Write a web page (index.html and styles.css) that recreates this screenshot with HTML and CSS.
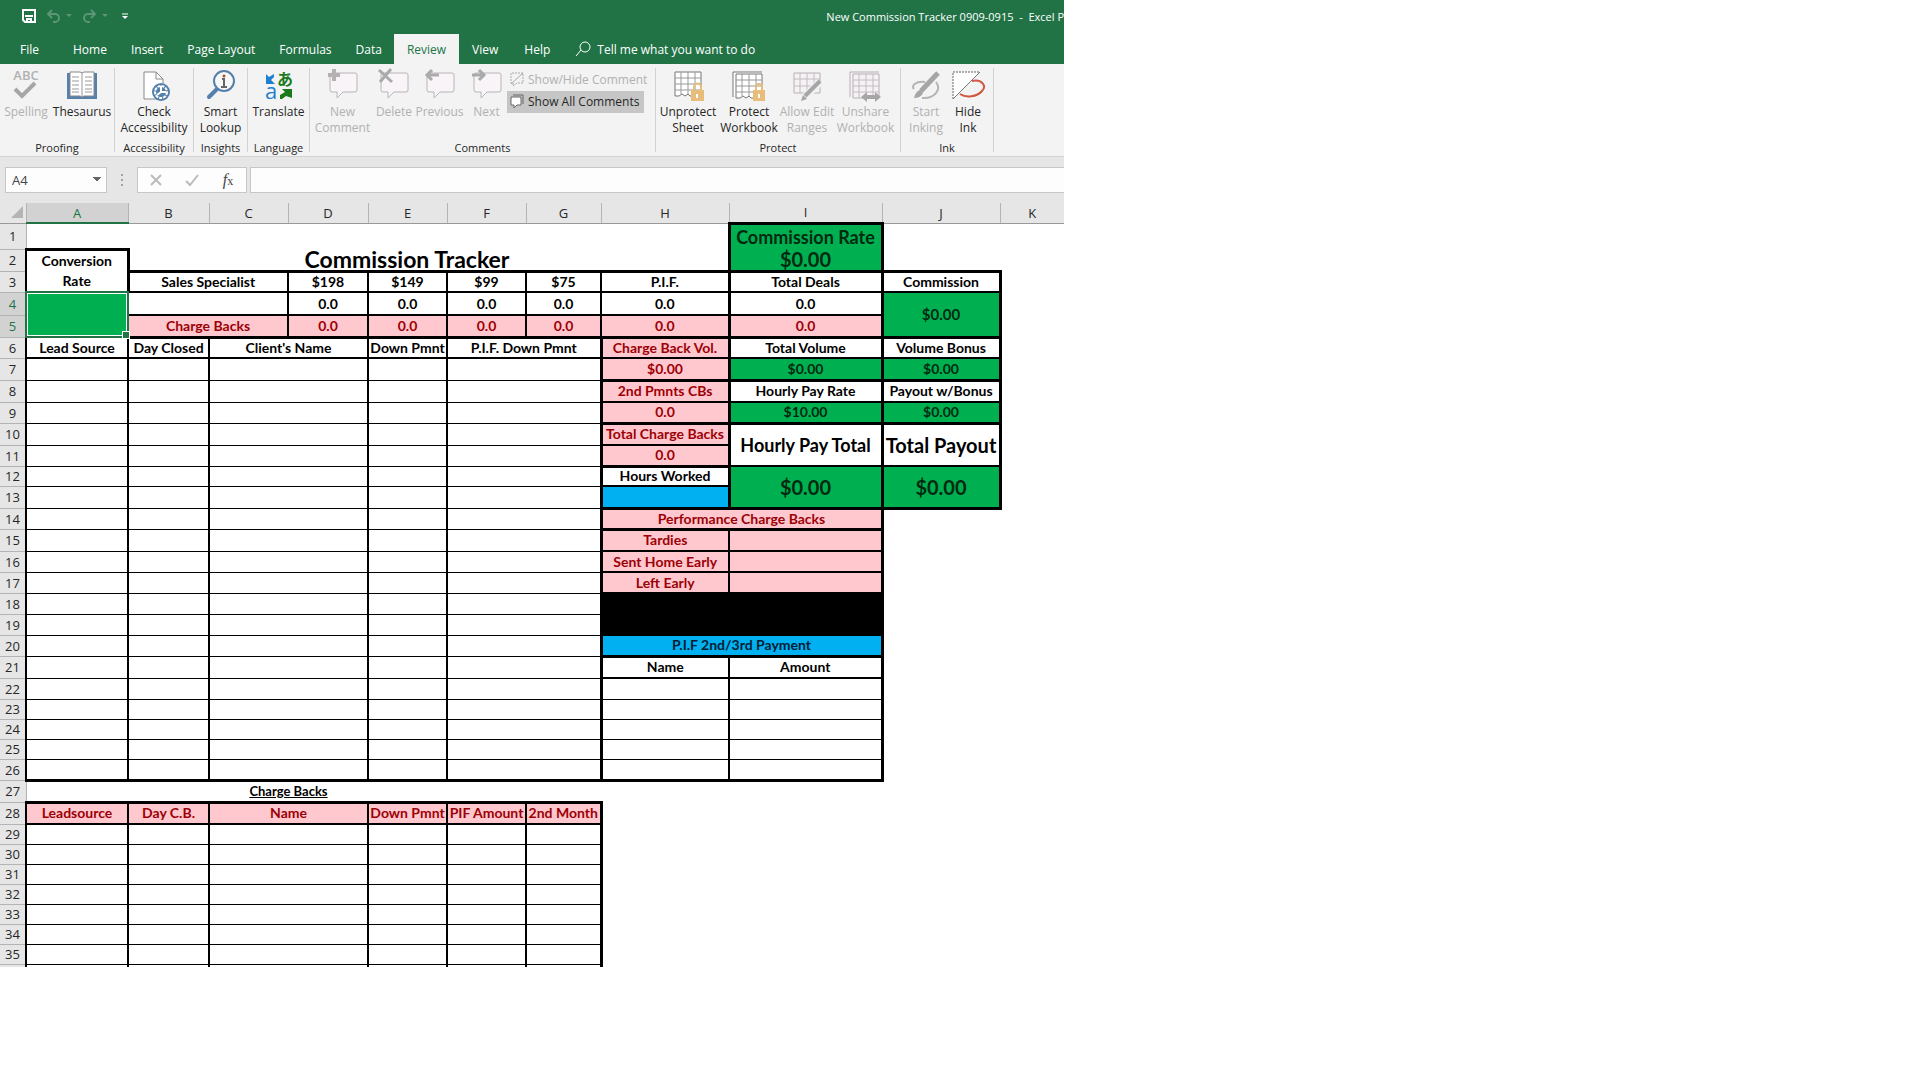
FILE: index.html
```html
<!DOCTYPE html>
<html lang="en">
<head>
  <meta charset="UTF-8">
  <meta name="viewport" content="width=device-width, initial-scale=1.0">
  <title>New Commission Tracker 0909-0915</title>
  <link rel="stylesheet" href="styles.css">
</head>
<body>
  <div class="app">
    <header class="titlebar">
      <div class="quick">
        <button aria-label="Save"><svg width="16" height="16" viewBox="0 0 16 16"><path d="M2 2h12v12H4l-2-2z M4 8h8" fill="none" stroke="#fff" stroke-width="2"/><path d="M5 10h6v4H9v-2H7v2H5z" fill="#fff"/></svg></button>
        <button aria-label="Undo"><svg width="28" height="16" viewBox="0 0 28 16"><path d="M3 6h7a4 4 0 0 1 0 8H8M7 2L3 6l4 4" fill="none" stroke="#5b9675" stroke-width="2"/><path d="M21 6h6l-3 3z" fill="#5b9675"/></svg></button>
        <button aria-label="Redo"><svg width="28" height="16" viewBox="0 0 28 16"><path d="M14 6H7a4 4 0 0 0 0 8h2M10 2l4 4-4 4" fill="none" stroke="#5b9675" stroke-width="2"/><path d="M21 6h6l-3 3z" fill="#5b9675"/></svg></button>
        <button aria-label="Customize Quick Access Toolbar"><svg width="16" height="16" viewBox="0 0 16 16"><path d="M5 6h6" stroke="#fff"/><path d="M5 8h6l-3 3z" fill="#fff"/></svg></button>
      </div>
      <div class="doc">New Commission Tracker 0909-0915 &nbsp;-&nbsp; Excel P</div>
    </header>

    <nav class="tabs">
      <button class="file">File</button>
      <button>Home</button>
      <button>Insert</button>
      <button>Page Layout</button>
      <button>Formulas</button>
      <button>Data</button>
      <button class="wide active">Review</button>
      <button class="wide">View</button>
      <button class="wide">Help</button>
      <button class="tell">
        <svg width="16" height="16" viewBox="0 0 16 16"><circle cx="10" cy="6" r="5" fill="none" stroke="#fff"/><path d="M6 9L1 15" stroke="#fff"/></svg>
        Tell me what you want to do
      </button>
    </nav>

    <div class="ribbon">
      <section class="group">
        <div class="tools proofing">
          <button disabled><svg viewBox="0 0 32 32"><text x="16" y="11" class="abc">ABC</text><path d="M5 20l7 7L25 14" fill="none" stroke="#a6a6a6" stroke-width="4"/></svg>Spelling</button>
          <button><svg viewBox="0 0 32 32"><path d="M1 4h30v26H1z" fill="#5580ab"/><path d="M4 3h10l2 1 2-1h10v24H18l-2 1-2-1H4z" fill="#fff" stroke="#888"/><path d="M16 4v24M6 8h7M6 12h7M6 16h7M6 20h7M6 23h7M19 8h7M19 12h7M19 16h7M19 20h7M19 23h7" stroke="#999"/></svg>Thesaurus</button>
        </div>
        <h2>Proofing</h2>
      </section>
      <section class="group">
        <div class="tools access">
          <button><svg viewBox="0 0 32 32"><path d="M6 3h12l7 7v20H6z" fill="#fff" stroke="#888"/><path d="M18 3v7h7" fill="none" stroke="#888"/><circle cx="23" cy="23" r="9" fill="#5580ab"/><circle cx="23" cy="23" r="6" fill="none" stroke="#fff" stroke-width="2" stroke-dasharray="3 1"/><path d="M23 17v6h5M23 23l-4 3" stroke="#fff" fill="none" stroke-width="2"/></svg>Check<br>Accessibility</button>
        </div>
        <h2>Accessibility</h2>
      </section>
      <section class="group">
        <div class="tools insights">
          <button><svg viewBox="0 0 32 32"><path d="M12 20L4 28" stroke="#5580ab" stroke-width="4" stroke-linecap="round"/><circle cx="19" cy="12" r="10" fill="#f8f8f8" stroke="#5580ab" stroke-width="2"/><path d="M17 10h2v8M16 18h6" fill="none" stroke="#666" stroke-width="2"/><circle cx="19" cy="7" r="1.500" fill="#a0522d"/></svg>Smart<br>Lookup</button>
        </div>
        <h2>Insights</h2>
      </section>
      <section class="group">
        <div class="tools language">
          <button><svg viewBox="0 0 32 32"><path d="M3 5l3 3 5-3v3L8 11l4 4H3z" fill="#1f7fd0"/><path d="M29 29V20h-10l3 3-5 3v4h2l4-3z" fill="#1b7a1b"/><text x="2" y="30" class="latin">a</text><text x="14" y="16" class="kana">あ</text></svg>Translate</button>
        </div>
        <h2>Language</h2>
      </section>
      <section class="group">
        <div class="tools comments">
          <button disabled><svg viewBox="0 0 32 32"><path d="M3 6q0-2 2-2h23q2 0 2 2v15q0 2-2 2H16l-6 6v-6H5q-2 0-2-2z" class="bubble"/><path d="M7 0v12M1 6h12" stroke="#b4b0b4" stroke-width="4"/></svg>New<br>Comment</button>
          <button disabled><svg viewBox="0 0 32 32"><path d="M3 6q0-2 2-2h23q2 0 2 2v15q0 2-2 2H16l-6 6v-6H5q-2 0-2-2z" class="bubble"/><path d="M1 1l13 12M13 0L2 13" stroke="#aaa" stroke-width="3"/></svg>Delete</button>
          <button disabled><svg viewBox="0 0 32 32"><path d="M3 6q0-2 2-2h23q2 0 2 2v15q0 2-2 2H16l-6 6v-6H5q-2 0-2-2z" class="bubble"/><path d="M3 6h12M8 1L3 6l5 5" fill="none" stroke="#aaa" stroke-width="3"/></svg>Previous</button>
          <button disabled><svg viewBox="0 0 32 32"><path d="M3 6q0-2 2-2h23q2 0 2 2v15q0 2-2 2H16l-6 6v-6H5q-2 0-2-2z" class="bubble"/><path d="M1 6h12M8 1l5 5-5 5" fill="none" stroke="#aaa" stroke-width="3"/></svg>Next</button>
          <div class="stack">
            <button disabled><svg viewBox="0 0 16 16"><path d="M2 3V1h12v10H8l-4 3v-3H2V3" fill="none" stroke="#aaa" stroke-dasharray="2 1"/><path d="M2 12L14 1" stroke="#aaa"/></svg>Show/Hide Comment</button>
            <button class="on"><svg viewBox="0 0 16 16"><path d="M4 1h10v9" fill="none" stroke="#666"/><path d="M2 3h10v8H8l-3 3v-3H2z" fill="#fff" stroke="#666"/></svg>Show All Comments</button>
          </div>
        </div>
        <h2>Comments</h2>
      </section>
      <section class="group">
        <div class="tools protect">
          <button><svg viewBox="0 0 32 32"><path d="M3 3h26v24H18l-2-2-3 2-3-2-3 2H3z" class="sheet"/><path d="M3 9h26M3 15h26M3 21h26M9 3v22M16 3v22M23 3v22" class="grid"/><path d="M19 21h13v11H19z" class="lock"/><path d="M22 21v-3a3 3 0 0 1 7 0v3" class="shackle"/><path d="M25 25v4" stroke="#fff" stroke-width="2"/></svg>Unprotect<br>Sheet</button>
          <button><svg viewBox="0 0 32 32"><path d="M0 28V3h29" class="sheet"/><path d="M3 5h26v24H18l-2-2-3 2-3-2-3 2H3z" class="sheet"/><path d="M3 11h26M3 17h26M3 23h26M9 5v22M16 5v22M23 5v22" class="grid"/><path d="M20 21h12v11H20z" class="lock"/><path d="M23 21v-3a3 3 0 0 1 6 0v3" class="shackle"/><path d="M26 25v4" stroke="#fff" stroke-width="2"/></svg>Protect<br>Workbook</button>
          <button disabled><svg viewBox="0 0 32 32"><path d="M3 4h26v20H3z" class="sheet"/><path d="M3 10h26M3 17h26M9 4v20M16 4v20M23 4v20" class="grid"/><path d="M14 28L29 13" stroke="#f1f1f1" stroke-width="8"/><path d="M14 27L29 12" stroke="#a6a6a6" stroke-width="4"/><path d="M10 32l2-6 4 4z" fill="#a6a6a6"/></svg>Allow Edit<br>Ranges</button>
          <button disabled><svg viewBox="0 0 32 32"><path d="M0 28V3h29" class="sheet"/><path d="M3 5h26v24H3z" class="sheet"/><path d="M3 11h26M3 17h26M3 23h26M9 5v24M16 5v24M23 5v24" class="grid"/><path d="M11 28l6-5v3h8v-3l6 5-6 5v-3h-8v3z" fill="#a6a6a6"/></svg>Unshare<br>Workbook</button>
        </div>
        <h2>Protect</h2>
      </section>
      <section class="group">
        <div class="tools ink">
          <button disabled><svg viewBox="0 0 32 32"><path d="M15 13C5 12 1 17 4 20M26 13c6 8-2 17-14 16" fill="none" stroke="#b4b4b4" stroke-width="2"/><path d="M11 22L28 4" stroke="#a6a6a6" stroke-width="5"/><path d="M4 29q2-8 7-8l2 3q-2 5-9 5z" fill="#a6a6a6"/></svg>Start<br>Inking</button>
          <button><svg viewBox="0 0 32 32"><path d="M1 30V3h27z" fill="#fff"/><path d="M1 30V3h27" fill="none" stroke="#666" stroke-dasharray="2 1"/><path d="M1 30L28 3" stroke="#777"/><path d="M20 12c10-2 15 5 10 10-5 6-16 7-22 3" fill="none" stroke="#d2573f" stroke-width="2"/></svg>Hide<br>Ink</button>
        </div>
        <h2>Ink</h2>
      </section>
    </div>

    <div class="formula-bar">
      <select class="name-box" aria-label="Name Box"><option>A4</option></select>
      <span class="dots"><i></i><i></i><i></i></span>
      <div class="entry">
        <button aria-label="Cancel"><svg width="14" height="14" viewBox="0 0 14 14"><path d="M2 2l10 10M12 2L2 12" stroke="#bbb" stroke-width="2"/></svg></button>
        <button aria-label="Enter"><svg width="14" height="14" viewBox="0 0 14 14"><path d="M1 8l4 4L13 2" fill="none" stroke="#bbb" stroke-width="2"/></svg></button>
        <button class="fx" aria-label="Insert Function"><i>f</i><sub>x</sub></button>
      </div>
      <input class="formula" type="text" aria-label="Formula">
    </div>

    <table class="sheet-table">
      <colgroup>
        <col class="w26"><col class="w102"><col class="w81"><col class="w79"><col class="w80"><col class="w79"><col class="w79"><col class="w75"><col class="w128"><col class="w153"><col class="w118"><col class="w64">
      </colgroup>
      <thead>
        <tr>
          <th class="corner"><svg width="12" height="12" viewBox="0 0 12 12"><path d="M12 0v12H0z" fill="#b4b4b4"/></svg></th>
          <th class="sel">A</th><th>B</th><th>C</th><th>D</th><th>E</th><th>F</th><th>G</th><th>H</th><th>I</th><th>J</th><th class="last">K</th>
        </tr>
      </thead>
      <tbody>
        <tr class="h26"><th>1</th><td></td><td></td><td></td><td colspan="3" rowspan="2" class="title">Commission Tracker</td><td></td><td></td><td class="box t3 l3 r3 b0 green rate">Commission Rate</td><td></td><td></td></tr>
        <tr class="h22"><th>2</th><td rowspan="2" class="box t3 r3 conv">Conversion<br>Rate</td><td></td><td></td><td></td><td></td><td class="box l3 r3 b3 t0 green total">$0.00</td><td></td><td></td></tr>
        <tr class="h21"><th>3</th><td colspan="2" class="box t3">Sales Specialist</td><td class="box t3">$198</td><td class="box t3">$149</td><td class="box t3">$99</td><td class="box t3">$75</td><td class="box t3 r3">P.I.F.</td><td class="box t3 r3">Total Deals</td><td class="box t3 r3">Commission</td><td></td></tr>
        <tr class="h23"><th class="sel">4</th><td rowspan="2" class="box green picked"></td><td colspan="2" class="box"></td><td class="box">0.0</td><td class="box">0.0</td><td class="box">0.0</td><td class="box">0.0</td><td class="box r3">0.0</td><td class="box r3">0.0</td><td rowspan="2" class="box b3 r3 green pay">$0.00</td><td></td></tr>
        <tr class="h22"><th class="sel">5</th><td colspan="2" class="box b3 pink">Charge Backs</td><td class="box b3 pink">0.0</td><td class="box b3 pink">0.0</td><td class="box b3 pink">0.0</td><td class="box b3 pink">0.0</td><td class="box b3 r3 pink">0.0</td><td class="box b3 r3 pink">0.0</td><td></td></tr>
        <tr class="h21"><th>6</th><td class="box">Lead Source</td><td class="box">Day Closed</td><td colspan="2" class="box">Client's Name</td><td class="box">Down Pmnt</td><td colspan="2" class="box r3">P.I.F. Down Pmnt</td><td class="box r3 pink">Charge Back Vol.</td><td class="box r3">Total Volume</td><td class="box r3">Volume Bonus</td><td></td></tr>
        <tr class="h22"><th>7</th><td class="line"></td><td class="line"></td><td colspan="2" class="line"></td><td class="line"></td><td colspan="2" class="line r3"></td><td class="box b3 r3 pink">$0.00</td><td class="box b3 r3 green">$0.00</td><td class="box b3 r3 green">$0.00</td><td></td></tr>
        <tr class="h22"><th>8</th><td class="line"></td><td class="line"></td><td colspan="2" class="line"></td><td class="line"></td><td colspan="2" class="line r3"></td><td class="box r3 pink">2nd Pmnts CBs</td><td class="box r3">Hourly Pay Rate</td><td class="box r3">Payout w/Bonus</td><td></td></tr>
        <tr class="h21"><th>9</th><td class="line"></td><td class="line"></td><td colspan="2" class="line"></td><td class="line"></td><td colspan="2" class="line r3"></td><td class="box b3 r3 pink">0.0</td><td class="box b3 r3 green">$10.00</td><td class="box b3 r3 green">$0.00</td><td></td></tr>
        <tr class="h22"><th>10</th><td class="line"></td><td class="line"></td><td colspan="2" class="line"></td><td class="line"></td><td colspan="2" class="line r3"></td><td class="box r3 pink">Total Charge Backs</td><td rowspan="2" class="box r3 rate">Hourly Pay Total</td><td rowspan="2" class="box r3 total">Total Payout</td><td></td></tr>
        <tr class="h21"><th>11</th><td class="line"></td><td class="line"></td><td colspan="2" class="line"></td><td class="line"></td><td colspan="2" class="line r3"></td><td class="box b3 r3 pink">0.0</td><td></td></tr>
        <tr class="h20"><th>12</th><td class="line"></td><td class="line"></td><td colspan="2" class="line"></td><td class="line"></td><td colspan="2" class="line r3"></td><td class="box r3">Hours Worked</td><td rowspan="2" class="box b3 r3 green total">$0.00</td><td rowspan="2" class="box b3 r3 green total">$0.00</td><td></td></tr>
        <tr class="h22"><th>13</th><td class="line"></td><td class="line"></td><td colspan="2" class="line"></td><td class="line"></td><td colspan="2" class="line r3"></td><td class="box b3 r3 blue"></td><td></td></tr>
        <tr class="h21"><th>14</th><td class="line"></td><td class="line"></td><td colspan="2" class="line"></td><td class="line"></td><td colspan="2" class="line r3"></td><td colspan="2" class="box b3 r3 pink">Performance Charge Backs</td><td></td><td></td></tr>
        <tr class="h22"><th>15</th><td class="line"></td><td class="line"></td><td colspan="2" class="line"></td><td class="line"></td><td colspan="2" class="line r3"></td><td class="box pink">Tardies</td><td class="box r3 pink"></td><td></td><td></td></tr>
        <tr class="h21"><th>16</th><td class="line"></td><td class="line"></td><td colspan="2" class="line"></td><td class="line"></td><td colspan="2" class="line r3"></td><td class="box pink">Sent Home Early</td><td class="box r3 pink"></td><td></td><td></td></tr>
        <tr class="h21"><th>17</th><td class="line"></td><td class="line"></td><td colspan="2" class="line"></td><td class="line"></td><td colspan="2" class="line r3"></td><td class="box pink">Left Early</td><td class="box r3 pink"></td><td></td><td></td></tr>
        <tr class="h21"><th>18</th><td class="line"></td><td class="line"></td><td colspan="2" class="line"></td><td class="line"></td><td colspan="2" class="line r3"></td><td colspan="2" rowspan="2" class="box r3 black"></td><td></td><td></td></tr>
        <tr class="h21"><th>19</th><td class="line"></td><td class="line"></td><td colspan="2" class="line"></td><td class="line"></td><td colspan="2" class="line r3"></td><td></td><td></td></tr>
        <tr class="h21"><th>20</th><td class="line"></td><td class="line"></td><td colspan="2" class="line"></td><td class="line"></td><td colspan="2" class="line r3"></td><td colspan="2" class="box b3 r3 blue">P.I.F 2nd/3rd Payment</td><td></td><td></td></tr>
        <tr class="h22"><th>21</th><td class="line"></td><td class="line"></td><td colspan="2" class="line"></td><td class="line"></td><td colspan="2" class="line r3"></td><td class="box">Name</td><td class="box r3">Amount</td><td></td><td></td></tr>
        <tr class="h21"><th>22</th><td class="line"></td><td class="line"></td><td colspan="2" class="line"></td><td class="line"></td><td colspan="2" class="line r3"></td><td class="line"></td><td class="line r3"></td><td></td><td></td></tr>
        <tr class="h20"><th>23</th><td class="line"></td><td class="line"></td><td colspan="2" class="line"></td><td class="line"></td><td colspan="2" class="line r3"></td><td class="line"></td><td class="line r3"></td><td></td><td></td></tr>
        <tr class="h20"><th>24</th><td class="line"></td><td class="line"></td><td colspan="2" class="line"></td><td class="line"></td><td colspan="2" class="line r3"></td><td class="line"></td><td class="line r3"></td><td></td><td></td></tr>
        <tr class="h20"><th>25</th><td class="line"></td><td class="line"></td><td colspan="2" class="line"></td><td class="line"></td><td colspan="2" class="line r3"></td><td class="line"></td><td class="line r3"></td><td></td><td></td></tr>
        <tr class="h21"><th>26</th><td class="line b3"></td><td class="line b3"></td><td colspan="2" class="line b3"></td><td class="line b3"></td><td colspan="2" class="line b3 r3"></td><td class="line b3"></td><td class="line b3 r3"></td><td></td><td></td></tr>
        <tr class="h22"><th>27</th><td></td><td></td><td colspan="2" class="under">Charge Backs</td><td></td><td></td><td></td><td></td><td></td><td></td><td></td></tr>
        <tr class="h22"><th>28</th><td class="box t3 pink">Leadsource</td><td class="box t3 pink">Day C.B.</td><td colspan="2" class="box t3 pink">Name</td><td class="box t3 pink">Down Pmnt</td><td class="box t3 pink">PIF Amount</td><td class="box t3 r3 pink">2nd Month</td><td></td><td></td><td></td><td></td></tr>
        <tr class="h20"><th>29</th><td class="line"></td><td class="line"></td><td colspan="2" class="line"></td><td class="line"></td><td class="line"></td><td class="line r3"></td><td></td><td></td><td></td><td></td></tr>
        <tr class="h20"><th>30</th><td class="line"></td><td class="line"></td><td colspan="2" class="line"></td><td class="line"></td><td class="line"></td><td class="line r3"></td><td></td><td></td><td></td><td></td></tr>
        <tr class="h20"><th>31</th><td class="line"></td><td class="line"></td><td colspan="2" class="line"></td><td class="line"></td><td class="line"></td><td class="line r3"></td><td></td><td></td><td></td><td></td></tr>
        <tr class="h20"><th>32</th><td class="line"></td><td class="line"></td><td colspan="2" class="line"></td><td class="line"></td><td class="line"></td><td class="line r3"></td><td></td><td></td><td></td><td></td></tr>
        <tr class="h20"><th>33</th><td class="line"></td><td class="line"></td><td colspan="2" class="line"></td><td class="line"></td><td class="line"></td><td class="line r3"></td><td></td><td></td><td></td><td></td></tr>
        <tr class="h20"><th>34</th><td class="line"></td><td class="line"></td><td colspan="2" class="line"></td><td class="line"></td><td class="line"></td><td class="line r3"></td><td></td><td></td><td></td><td></td></tr>
        <tr class="h20"><th>35</th><td class="line"></td><td class="line"></td><td colspan="2" class="line"></td><td class="line"></td><td class="line"></td><td class="line r3"></td><td></td><td></td><td></td><td></td></tr>
        <tr class="cut"><th></th><td class="line"></td><td class="line"></td><td colspan="2" class="line"></td><td class="line"></td><td class="line"></td><td class="line r3"></td><td></td><td></td><td></td><td></td></tr>
      </tbody>
    </table>
  </div>
</body>
</html>
```
FILE: styles.css
```css
* {
  box-sizing: border-box;
}
body {
  margin: 0;
  background: #fff;
  font-family: "Open Sans", "Noto Sans", sans-serif;
  font-size: 12px;
  color: #262626;
}
button {
  border: none;
  background: none;
  padding: 0;
  font: inherit;
  color: inherit;
  white-space: nowrap;
}
svg {
  overflow: visible;
}
.app {
  width: fit-content;
}

/* Title bar */
.titlebar {
  display: flex;
  justify-content: space-between;
  align-items: center;
  height: 34px;
  padding: 0 0 2px 21px;
  background: #217346;
  color: #fff;
}
.quick {
  display: flex;
  gap: 8px;
}
.quick button {
  display: flex;
}
.doc {
  font-size: 11px;
}

/* Tabs */
.tabs {
  display: flex;
  height: 30px;
  background: #217346;
  color: #fff;
}
.tabs button {
  padding: 0 12px;
}
.tabs .file {
  padding: 0 22px 0 20px;
}
.tabs .wide {
  padding: 0 13px;
}
.tabs .active {
  background: #f3f3f3;
  color: #217346;
}
.tabs .tell {
  display: flex;
  align-items: center;
  gap: 6px;
}

/* Ribbon */
.ribbon {
  display: flex;
  height: 93px;
  padding-top: 4px;
  background: #f3f3f3;
  border-bottom: 1px solid #d2d2d2;
}
.group {
  height: 84px;
  padding-top: 1px;
  border-right: 1px solid #d2d2d2;
}
.group h2 {
  margin: 0;
  font-size: 11px;
  font-weight: normal;
  line-height: 16px;
  text-align: center;
}
.tools {
  display: grid;
  height: 71px;
  align-items: start;
}
.tools button {
  line-height: 16px;
}
.tools button:disabled {
  color: #b1b1b1;
}
.tools > button > svg {
  display: block;
  width: 32px;
  height: 32px;
  margin: 0 auto 3px;
}
.proofing { grid-template-columns: 52px 60px 2px; }
.access { grid-template-columns: 78px; }
.insights { grid-template-columns: 53px; }
.language { grid-template-columns: 61px; }
.comments { grid-template-columns: 65px 38px 53px 41px 148px; }
.protect { grid-template-columns: 64px 58px 58px 59px 5px; }
.ink { grid-template-columns: 50px 34px 8px; }
.stack button {
  display: flex;
  align-items: center;
  gap: 3px;
  width: 137px;
  height: 22px;
  padding-left: 2px;
}
.stack .on {
  background: #c6c6c6;
}
.stack svg {
  flex: none;
  width: 16px;
  height: 16px;
}
.abc {
  font-size: 13px;
  font-weight: 600;
  text-anchor: middle;
  fill: #b1b1b1;
}
.latin {
  font-size: 22px;
  fill: #1f7fd0;
}
.kana {
  font-family: "Noto Sans CJK JP", sans-serif;
  font-size: 16px;
  font-weight: bold;
  fill: #1b7a1b;
}
.bubble {
  fill: #f8f4f8;
  stroke: #b8b4b8;
}
.sheet {
  fill: #fff;
  stroke: #777;
}
.grid {
  stroke: #999;
}
button:disabled .sheet {
  fill: #f5f1f5;
  stroke: #b4b0b4;
}
button:disabled .grid {
  stroke: #c0bcc0;
}
.lock {
  fill: #e8bd7b;
}
.shackle {
  fill: none;
  stroke: #e8bd7b;
  stroke-width: 2;
}

/* Formula bar */
.formula-bar {
  display: flex;
  height: 46px;
  padding: 10px 0 10px 5px;
  background: #e6e6e6;
}
.name-box,
.entry,
.formula {
  border: 1px solid #c6c6c6;
  background: #fdfdfd;
}
.name-box {
  width: 102px;
  padding: 0 6px;
  appearance: none;
  border-radius: 0;
  font: inherit;
  font-size: 13px;
  color: #444;
  background: conic-gradient(from 315deg at 50% 100%, #666 90deg, #fdfdfd 0) 87px 9px / 8px 4px no-repeat #fdfdfd;
}
.dots {
  display: flex;
  flex-direction: column;
  justify-content: center;
  align-items: center;
  gap: 3px;
  width: 30px;
}
.dots i {
  width: 2px;
  height: 2px;
  background: #a0a0a0;
}
.entry {
  display: flex;
  width: 110px;
  margin-right: 3px;
}
.entry button {
  flex: 1;
}
.entry svg {
  display: block;
  margin: 0 auto;
}
.entry .fx {
  font-family: "Liberation Serif", serif;
  font-size: 16px;
  color: #444;
}
.fx sub {
  font-size: 12px;
  vertical-align: baseline;
}
.formula {
  flex: 1;
  min-width: 0;
  border-right: none;
}

/* Worksheet */
.sheet-table {
  table-layout: fixed;
  width: min-content;
  border-collapse: collapse;
  font-family: Lato, "Open Sans", sans-serif;
  font-size: 14px;
  font-weight: bold;
  line-height: 16px;
  text-align: center;
  color: #000;
}
.w26 { width: 26px; }
.w64 { width: 64px; }
.w75 { width: 75px; }
.w79 { width: 79px; }
.w80 { width: 80px; }
.w81 { width: 81px; }
.w102 { width: 102px; }
.w118 { width: 118px; }
.w128 { width: 128px; }
.w153 { width: 153px; }
.h20 { height: 20px; }
.h21 { height: 21px; }
.h22 { height: 22px; }
.h23 { height: 23px; }
.h26 { height: 26px; }
.cut { height: 3px; }
th,
td {
  padding: 0;
  white-space: nowrap;
}
th {
  border: 1px solid #b4b4b4;
  background: #e6e6e6;
  font-family: "Open Sans", "Noto Sans", sans-serif;
  font-size: 13px;
  font-weight: normal;
  color: #262626;
}
thead th {
  height: 20px;
  border-top: none;
  border-bottom-color: #999;
}
thead .last {
  border-right: none;
}
tbody th {
  border-left: none;
}
.corner {
  border-left: none;
  text-align: right;
}
.corner svg {
  display: inline-block;
  margin-right: 3px;
}
th.sel {
  background: #d2d2d2;
  color: #217346;
}
thead .sel {
  border-bottom: 2px solid #217346;
}
tbody .sel {
  border-right: 2px solid #217346;
}
.box {
  border: 2px solid #000;
}
.line {
  border: solid #000;
  border-width: 1px 2px;
}
.t3 { border-top-width: 3px; }
.r3 { border-right-width: 3px; }
.b3 { border-bottom-width: 3px; }
.l3 { border-left-width: 3px; }
.t0 { border-top: none; }
.b0 { border-bottom: none; }
.cut th,
.cut td {
  border-bottom: none;
}
.green {
  background: #00b050;
  color: #002a10;
}
.pink {
  background: #ffc7ce;
  color: #9c0006;
}
.blue {
  background: #00b0f0;
  color: #001c33;
}
.black {
  background: #000;
}
.title {
  font-size: 23px;
  line-height: 22px;
  vertical-align: bottom;
}
.conv {
  line-height: 20px;
}
.pay {
  font-size: 15px;
}
.rate {
  font-size: 18px;
}
.total {
  font-size: 20px;
}
.under {
  font-size: 13px;
  text-decoration: underline;
}
.picked {
  position: relative;
}
.picked::before {
  content: "";
  position: absolute;
  inset: -2px;
  border: 2px solid #217346;
  box-shadow: inset 0 0 0 1px #fff;
}
.picked::after {
  content: "";
  position: absolute;
  right: -3px;
  bottom: -3px;
  width: 6px;
  height: 6px;
  border: 1px solid #fff;
  background: #217346;
}
```
